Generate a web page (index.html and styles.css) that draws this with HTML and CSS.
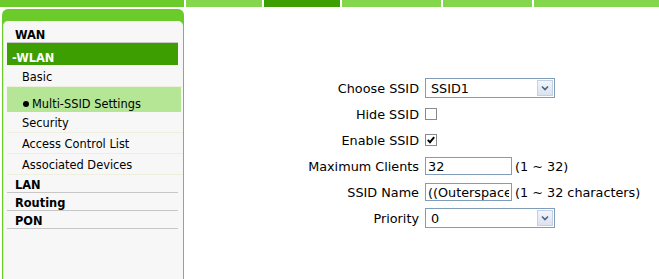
FILE: index.html
```html
<!DOCTYPE html>
<html lang="en">
<head>
<meta charset="utf-8">
<title>Multi-SSID Settings</title>
<link rel="stylesheet" href="styles.css">
</head>
<body>
<div class="topnav">
  <div class="tab tab-first"></div>
  <div class="tab tab-2"></div>
  <div class="tab tab-3 active"></div>
  <div class="tab tab-4"></div>
  <div class="tab tab-5"></div>
  <div class="tab tab-last"></div>
</div>
<div class="layout">
  <aside class="sidebar">
    <div class="panel">
      <div class="menu-top">WAN</div>
      <div class="menu-top open">-WLAN</div>
      <div class="menu-sub basic">Basic</div>
      <div class="menu-sub current"><span class="dot"></span>Multi-SSID Settings</div>
      <div class="menu-sub">Security</div>
      <div class="menu-sub">Access Control List</div>
      <div class="menu-sub">Associated Devices</div>
      <div class="menu-top">LAN</div>
      <div class="menu-top">Routing</div>
      <div class="menu-top">PON</div>
    </div>
  </aside>
  <main class="content">
    <div class="form">
      <div class="label">Choose SSID</div>
      <div class="ctrl">
        <div class="select wide"><span class="sel-text">SSID1</span><span class="sel-btn"><svg width="16" height="16" viewBox="0 0 16 16"><defs><linearGradient id="g1" x1="0" y1="0" x2="0" y2="1"><stop offset="0" stop-color="#f3f6fb"/><stop offset="1" stop-color="#d9e2ef"/></linearGradient></defs><rect x="0.5" y="0.5" width="15" height="15" fill="url(#g1)" stroke="#c3d0e3"/><polyline points="5,6.5 8,9.5 11,6.5" fill="none" stroke="#4d6185" stroke-width="1.6"/></svg></span></div>
      </div>
      <div class="label">Hide SSID</div>
      <div class="ctrl"><span class="check"></span></div>
      <div class="label">Enable SSID</div>
      <div class="ctrl"><span class="check"><svg width="10" height="10" viewBox="0 0 10 10"><polyline points="1.8,4.8 4,7.2 8.2,2.2" fill="none" stroke="#000" stroke-width="1.9"/></svg></span></div>
      <div class="label">Maximum Clients</div>
      <div class="ctrl"><input class="text-input" type="text" value="32"><span class="hint">(1 ~ 32)</span></div>
      <div class="label">SSID Name</div>
      <div class="ctrl"><input class="text-input" type="text" value="((Outerspace))"><span class="hint">(1 ~ 32 characters)</span></div>
      <div class="label">Priority</div>
      <div class="ctrl">
        <div class="select wide"><span class="sel-text">0</span><span class="sel-btn"><svg width="16" height="16" viewBox="0 0 16 16"><defs><linearGradient id="g2" x1="0" y1="0" x2="0" y2="1"><stop offset="0" stop-color="#f3f6fb"/><stop offset="1" stop-color="#d9e2ef"/></linearGradient></defs><rect x="0.5" y="0.5" width="15" height="15" fill="url(#g2)" stroke="#c3d0e3"/><polyline points="5,6.5 8,9.5 11,6.5" fill="none" stroke="#4d6185" stroke-width="1.6"/></svg></span></div>
      </div>
    </div>
  </main>
</div>
</body>
</html>
```
FILE: styles.css
```css
html, body {
  margin: 0;
  height: 100%;
  overflow: hidden;
  background: #fff;
}
body {
  font-family: "DejaVu Sans", Verdana, sans-serif;
  color: #000;
}
.topnav {
  display: flex;
  gap: 2px;
  height: 7px;
}
.tab { background: #84d74c; }
.tab-first { width: 184px; background: #6bcb2b; }
.tab-2 { width: 76px; }
.tab-3 { width: 76px; }
.tab-4 { width: 99px; }
.tab-5 { width: 89px; }
.tab-last { flex: 1; }
.tab.active { background: #3d9f02; }

.layout {
  display: flex;
  margin-top: 2px;
  height: 270px;
}
.sidebar {
  margin-left: 2px;
  width: 180px;
  padding: 12px 1px 0 1px;
  background: #6bcb2b;
  border-radius: 6px 6px 0 0;
}
.panel {
  height: 100%;
  box-sizing: border-box;
  background: #f7f7f7;
  border-radius: 5px 5px 0 0;
  border-left: 1px solid #dde5d8;
  padding-top: 4px;
  font-size: 11.4px;
}
.menu-top {
  margin: 0 5px 0 3px;
  padding: 4px 0 0 8px;
  line-height: 13px;
  border-bottom: 1px solid #c6c6c6;
  font-weight: bold;
}
.menu-top.open {
  background: #3c9e00;
  color: #fff;
  padding: 8px 0 0 5px;
  line-height: 14px;
  border-bottom: none;
}
.menu-sub {
  margin: 0 0 0 3px;
  padding: 3px 0 0 15px;
  line-height: 17px;
  border-bottom: 1px solid #efefdf;
}
.menu-sub.basic { line-height: 18px; }
.menu-sub.current {
  margin-right: 2px;
  background: #b4e696;
  padding: 10px 0 0 16px;
  line-height: 15px;
  border-bottom: none;
}
.dot {
  display: inline-block;
  width: 6px;
  height: 6px;
  border-radius: 50%;
  background: #000;
  margin-right: 3px;
  vertical-align: 1px;
}

.content {
  flex: 1;
  padding-top: 66px;
  font-size: 12.8px;
}
.form {
  display: grid;
  grid-template-columns: 235px 1fr;
  column-gap: 6px;
  grid-auto-rows: 26px;
  align-items: center;
}
.label { text-align: right; }
.ctrl {
  display: flex;
  align-items: center;
}
.select {
  display: flex;
  align-items: center;
  width: 130px;
  height: 20px;
  box-sizing: border-box;
  border: 1px solid #7f9db9;
  background: #fff;
}
.sel-text { padding-left: 5px; }
.sel-btn {
  margin-left: auto;
  margin-right: 1px;
  width: 16px;
  height: 16px;
  display: flex;
}
.check {
  width: 12px;
  height: 12px;
  box-sizing: border-box;
  border: 1px solid #8a8a8a;
  background: #fff;
  display: flex;
  align-items: center;
  justify-content: center;
}
.text-input {
  width: 87px;
  height: 18px;
  box-sizing: border-box;
  border: 1px solid #7f9db9;
  padding: 0 2px;
  margin: 0;
  font: inherit;
  color: #000;
  background: #fff;
  outline: none;
}
.hint { margin-left: 3px; }
```
